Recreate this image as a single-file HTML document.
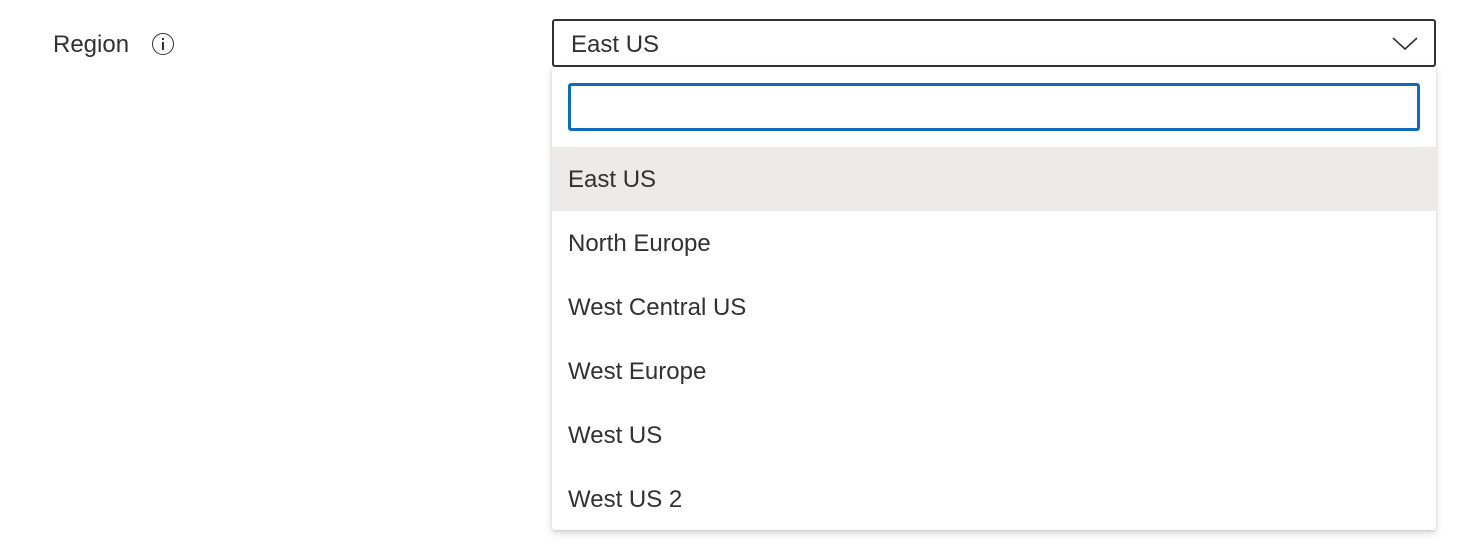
<!DOCTYPE html>
<html><head><style>
body{margin:0;width:1482px;height:554px;background:#fff;font-family:"Liberation Sans",sans-serif;color:#323130;position:relative;overflow:hidden}
.lbl{position:absolute;left:53px;top:31px;font-size:24px;color:#323130}
.info{position:absolute;left:152px;top:33px;width:20px;height:20px;border:1.5px solid #323130;border-radius:50%;}
.info:before{content:"";position:absolute;left:9px;top:4px;width:2px;height:2px;background:#323130}
.info:after{content:"";position:absolute;left:9px;top:8px;width:2px;height:8px;background:#323130}
.sel{position:absolute;left:552px;top:19px;width:880px;height:44px;border:2px solid #323130;border-radius:3px;box-sizing:content-box}
.sel span{position:absolute;left:17px;top:10px;font-size:24px}
.sel svg{position:absolute;right:16px;top:16px}
.panel{position:absolute;left:552px;top:67px;width:884px;height:463px;background:#fff;box-shadow:0 3px 8px rgba(0,0,0,.16),0 1px 2px rgba(0,0,0,.1);border-radius:0 0 3px 3px}
.search{position:absolute;left:16px;top:16px;width:846px;height:42px;border:3px solid #0f6cbd;border-radius:3px}
.item{position:absolute;left:0;width:884px;height:64px;font-size:24px}
.item span{position:absolute;left:16px;top:19px}
.hl{background:#edebe9}
</style></head><body>
<div class="lbl">Region</div>
<div class="info"></div>
<div class="sel"><span>East US</span>
<svg width="26" height="14" viewBox="0 0 26 14"><path d="M1 1 L13 12 L25 1" fill="none" stroke="#323130" stroke-width="1.6"/></svg></div>
<div class="panel">
<div class="search"></div>
<div class="item hl" style="top:80px"><span>East US</span></div>
<div class="item" style="top:144px"><span>North Europe</span></div>
<div class="item" style="top:208px"><span>West Central US</span></div>
<div class="item" style="top:272px"><span>West Europe</span></div>
<div class="item" style="top:336px"><span>West US</span></div>
<div class="item" style="top:400px"><span>West US 2</span></div>
</div>
</body></html>
